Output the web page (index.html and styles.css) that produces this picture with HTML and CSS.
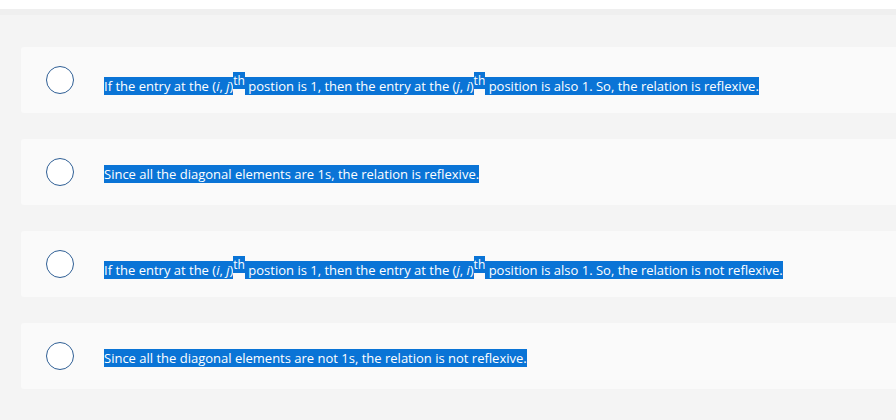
FILE: index.html
```html
<!DOCTYPE html>
<html>
<head>
<meta charset="utf-8">
<link rel="stylesheet" href="styles.css">
</head>
<body>
<div class="topbar"></div>
<div class="divider"></div>
<div class="options">
  <div class="option">
    <span class="radio"></span>
    <p class="opt-text has-sup"><span class="hl">If the entry at the (<i>i</i>, <i>j</i>)</span><sup class="hl">th</sup><span class="hl"> postion is 1, then the entry at the (<i>j</i>, <i>i</i>)</span><sup class="hl">th</sup><span class="hl"> position is also 1. So, the relation is reflexive.</span></p>
  </div>
  <div class="option">
    <span class="radio"></span>
    <p class="opt-text"><span class="hl">Since all the diagonal elements are 1s, the relation is reflexive.</span></p>
  </div>
  <div class="option">
    <span class="radio"></span>
    <p class="opt-text has-sup"><span class="hl">If the entry at the (<i>i</i>, <i>j</i>)</span><sup class="hl">th</sup><span class="hl"> postion is 1, then the entry at the (<i>j</i>, <i>i</i>)</span><sup class="hl">th</sup><span class="hl"> position is also 1. So, the relation is not reflexive.</span></p>
  </div>
  <div class="option">
    <span class="radio"></span>
    <p class="opt-text"><span class="hl">Since all the diagonal elements are not 1s, the relation is not reflexive.</span></p>
  </div>
</div>
</body>
</html>
```
FILE: styles.css
```css
html, body {
  margin: 0;
  padding: 0;
}
body {
  background: #f4f4f4;
  font-family: "Open Sans", "Liberation Sans", sans-serif;
  font-size: 13px;
  color: #333;
  height: 420px;
  overflow: hidden;
}
.topbar {
  height: 9px;
  background: #ffffff;
}
.divider {
  height: 6px;
  background: #efefef;
}
.options {
  display: flex;
  flex-direction: column;
  gap: 26px;
  padding: 32px 0 0 21px;
}
.option {
  height: 66px;
  background: #fafafa;
  border-radius: 3px 0 0 3px;
  display: flex;
  align-items: center;
  padding-left: 25px;
}
.radio {
  flex: none;
  width: 26px;
  height: 26px;
  border: 1.5px solid #2f5f95;
  border-radius: 50%;
  background: #ffffff;
  margin-right: 30px;
}
.opt-text {
  margin: 0;
  margin-top: 4px;
  line-height: 16px;
  white-space: nowrap;
}
.opt-text.has-sup {
  margin-top: 12px;
}
.hl {
  background: #0a74d6;
  color: #ffffff;
}
sup.hl {
  font-size: 12px;
  vertical-align: 6px;
  line-height: 0;
}
```
